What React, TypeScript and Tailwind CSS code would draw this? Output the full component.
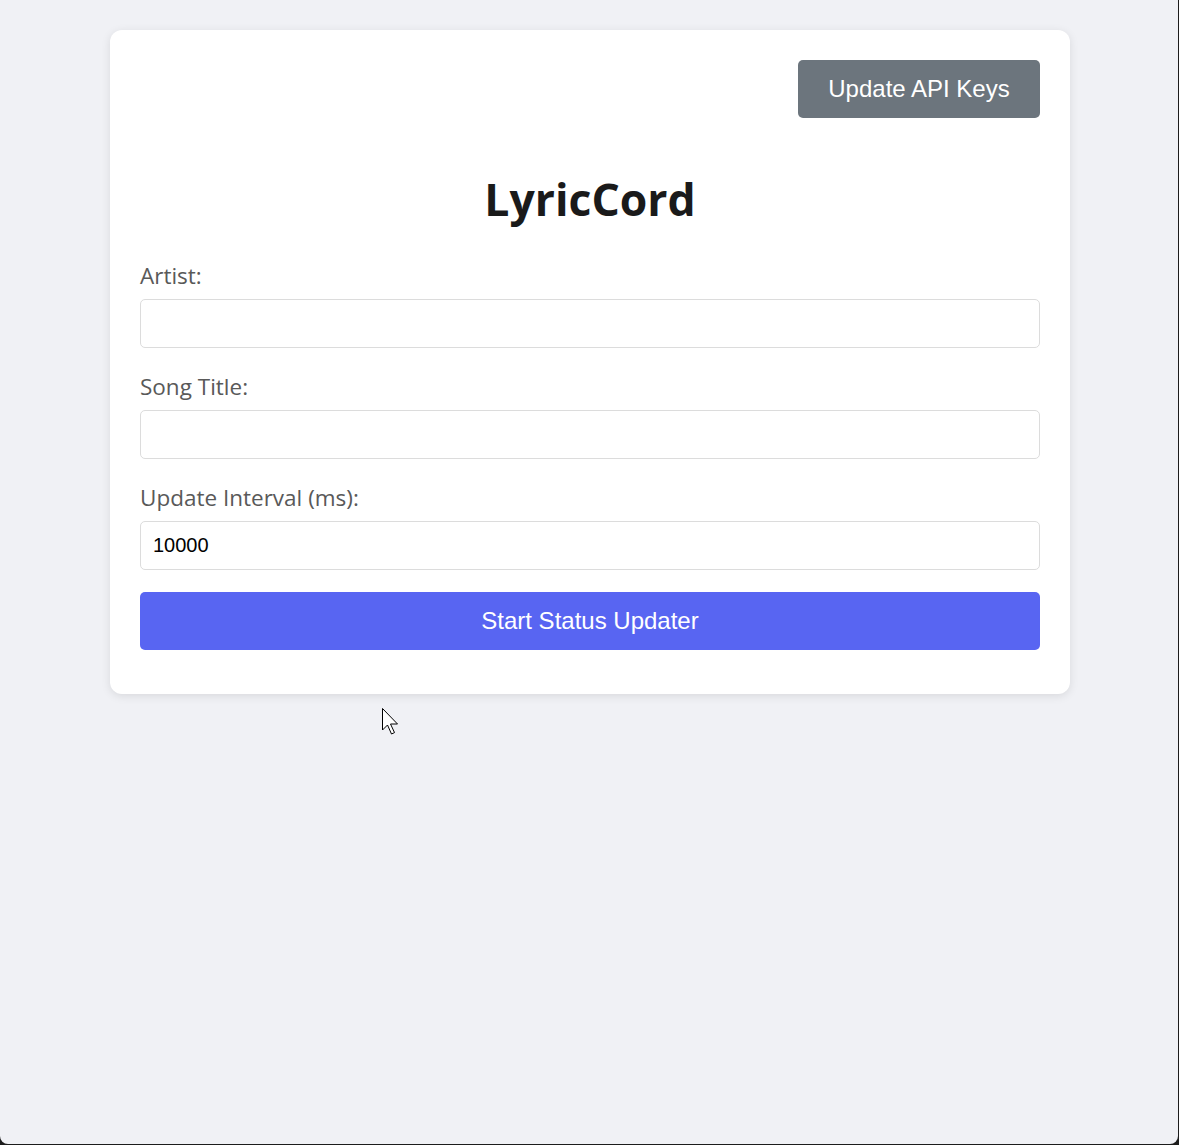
import React from "react";

const labelFont = { fontFamily: '"Open Sans", "Noto Sans", sans-serif' };

function Field({ label, value }: { label: string; value?: string }) {
  return (
    <div className="mb-[22px]">
      <label
        className="mb-[6px] block text-[22.5px] leading-[34px] text-[#595959]"
        style={labelFont}
      >
        {label}
      </label>
      <input
        type="text"
        defaultValue={value}
        className="block h-[49px] w-full rounded-[5px] border border-[#dcdcdc] bg-white px-[12px] font-['Liberation_Sans',Arial,sans-serif] text-[20px] text-black outline-none"
      />
    </div>
  );
}

export default function App() {
  return (
    <div className="h-[1145px] w-[1179px] bg-[#1c1c1c]">
      <div className="relative h-[1144px] w-[1178px] overflow-hidden rounded-b-[8px] bg-[#f0f1f5] pt-[30px]">
        <div className="ml-[110px] w-[960px] rounded-[12px] bg-white px-[30px] pb-[44px] pt-[30px] shadow-[0_2px_10px_rgba(0,0,0,0.1)]">
          <div className="flex justify-end">
            <button className="h-[58px] w-[242px] rounded-[5px] bg-[#6c757d] font-['Liberation_Sans',Arial,sans-serif] text-[24px] text-white">
              Update API Keys
            </button>
          </div>

          <h1
            className="mb-[31px] mt-[52px] text-center text-[44.5px] font-bold leading-[58px] text-[#1a1a1a]"
            style={labelFont}
          >
            LyricCord
          </h1>

          <Field label="Artist:" />
          <Field label="Song Title:" />
          <Field label="Update Interval (ms):" value="10000" />

          <button className="h-[58px] w-full rounded-[5px] bg-[#5865f2] font-['Liberation_Sans',Arial,sans-serif] text-[24px] text-white">
            Start Status Updater
          </button>
        </div>

        <svg
          className="absolute left-[382px] top-[708px]"
          width="18"
          height="28"
          viewBox="0 0 18 28"
        >
          <path
            d="M0.5 0.5 L0.5 22 L5.5 17 L9.5 26 L12.5 24.6 L8.5 16 L15.5 16 Z"
            fill="white"
            stroke="black"
            strokeWidth="1"
            strokeLinejoin="round"
          />
        </svg>
      </div>
    </div>
  );
}
